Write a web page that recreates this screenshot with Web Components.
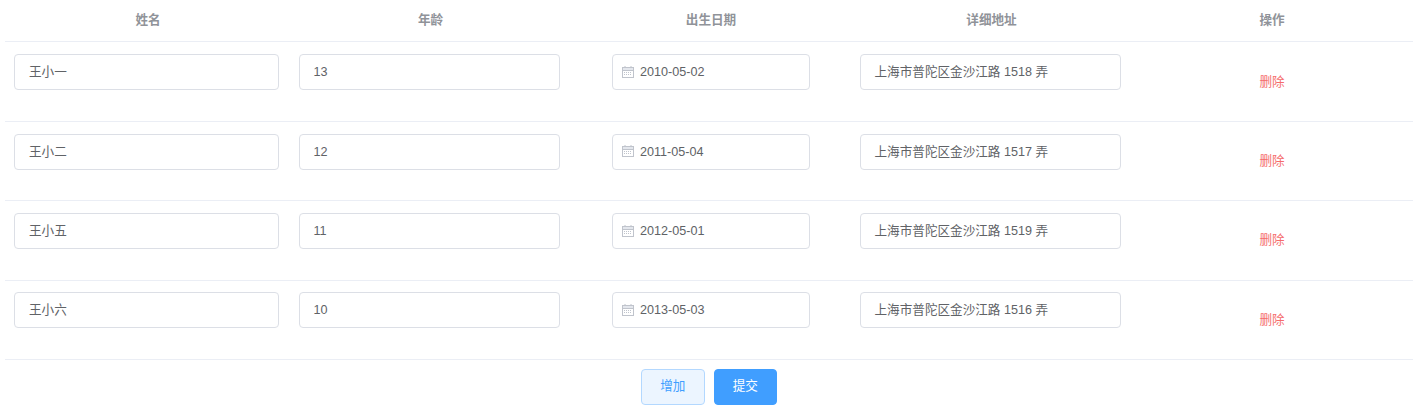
<!DOCTYPE html>
<html lang="zh">
<head>
<meta charset="utf-8">
<title>table</title>
<style>
  html, body { margin: 0; background: #fff; }
  body { font: 12.6px/18px "Liberation Sans", "Noto Sans CJK SC", sans-serif; color: #606266; }
</style>
</head>
<body>
<edit-table>
  <table-row head>
    <span>姓名</span><span>年龄</span><span>出生日期</span><span>详细地址</span><span>操作</span>
  </table-row>
  <table-row>
    <text-field>王小一</text-field><text-field>13</text-field><date-field>2010-05-02</date-field><text-field>上海市普陀区金沙江路 1518 弄</text-field><del-link>删除</del-link>
  </table-row>
  <table-row>
    <text-field>王小二</text-field><text-field>12</text-field><date-field>2011-05-04</date-field><text-field>上海市普陀区金沙江路 1517 弄</text-field><del-link>删除</del-link>
  </table-row>
  <table-row>
    <text-field>王小五</text-field><text-field>11</text-field><date-field>2012-05-01</date-field><text-field>上海市普陀区金沙江路 1519 弄</text-field><del-link>删除</del-link>
  </table-row>
  <table-row>
    <text-field>王小六</text-field><text-field>10</text-field><date-field>2013-05-03</date-field><text-field>上海市普陀区金沙江路 1516 弄</text-field><del-link>删除</del-link>
  </table-row>
  <ui-button slot="footer" plain>增加</ui-button>
  <ui-button slot="footer">提交</ui-button>
</edit-table>

<script>
'use strict';
function shadow(el, html) {
  el.attachShadow({mode: 'open'}).innerHTML = html;
}

class EditTable extends HTMLElement {
  constructor() {
    super();
    shadow(this, `
  <style>
    :host { display: block; padding: 0 6px 0 5px; }
    .footer {
      display: flex;
      justify-content: center;
      gap: 9px;
      padding-top: 9px;
    }
  </style>
  <slot></slot>
  <div class="footer"><slot name="footer"></slot></div>
    `);
  }
}
customElements.define('edit-table', EditTable);

class TableRow extends HTMLElement {
  constructor() {
    super();
    shadow(this, `
  <style>
    :host {
      display: grid;
      grid-template-columns: 284px 281px 280px 281px 282px;
      box-sizing: border-box;
      height: 79.4px;
      border-bottom: 1px solid #ebeef5;
      align-items: start;
    }
    :host([head]) {
      height: 42.35px;
      align-items: center;
      justify-items: center;
      font-weight: bold;
      color: #909399;
      padding-bottom: 1px;
    }
    ::slotted(span) { position: relative; left: 1px; }
    ::slotted(span:last-child) { left: 0; }
  </style>
  <slot></slot>
    `);
  }
}
customElements.define('table-row', TableRow);

class TextField extends HTMLElement {
  constructor() {
    super();
    shadow(this, `
  <style>
    :host {
      display: flex;
      align-items: center;
      box-sizing: border-box;
      height: 36px;
      margin: 11.9px 10px 0;
      padding: 0 13.5px;
      border: 1px solid #dcdfe6;
      border-radius: 4px;
      background: #fff;
      white-space: nowrap;
    }
    :host(:first-child) { margin-left: 9px; padding-left: 14px; }
  </style>
  <slot></slot>
    `);
  }
}
customElements.define('text-field', TextField);

class DateField extends HTMLElement {
  constructor() {
    super();
    shadow(this, `
  <style>
    :host {
      display: flex;
      align-items: center;
      gap: 6px;
      box-sizing: border-box;
      width: 198px;
      height: 36px;
      margin: 11.9px 0 0 42px;
      padding: 0 9px;
      border: 1px solid #dcdfe6;
      border-radius: 4px;
      background: #fff;
    }
    svg { flex: none; margin-top: -1px; }
  </style>
  <svg width="12" height="12" viewBox="0 0 12 12" fill="none" stroke="#c0c4cc" stroke-width="1">
    <path d="M1 2h10v2.5H1z" fill="#e4e7ed" stroke="none"/>
    <rect x="0.5" y="1.5" width="11" height="10"/>
    <path d="M0.5 4.5h11M3 0v2M9 0v2"/>
    <path d="M2 6.5h8M2 8.5h8" stroke-dasharray="1 1"/>
  </svg>
  <slot></slot>
    `);
  }
}
customElements.define('date-field', DateField);

class DelLink extends HTMLElement {
  constructor() {
    super();
    shadow(this, `
  <style>
    :host {
      display: block;
      justify-self: center;
      align-self: center;
      color: #f56c6c;
      cursor: pointer;
    }
  </style>
  <slot></slot>
    `);
  }
}
customElements.define('del-link', DelLink);

class UiButton extends HTMLElement {
  constructor() {
    super();
    shadow(this, `
  <style>
    :host {
      display: flex;
      align-items: center;
      justify-content: center;
      box-sizing: border-box;
      width: 63.5px;
      height: 36px;
      padding-bottom: 1px;
      border: 1px solid #409eff;
      border-radius: 4px;
      background: #409eff;
      color: #fff;
      cursor: pointer;
    }
    :host([plain]) {
      background: #ecf5ff;
      border-color: #b3d8ff;
      color: #409eff;
    }
  </style>
  <slot></slot>
    `);
  }
}
customElements.define('ui-button', UiButton);
</script>
</body>
</html>
